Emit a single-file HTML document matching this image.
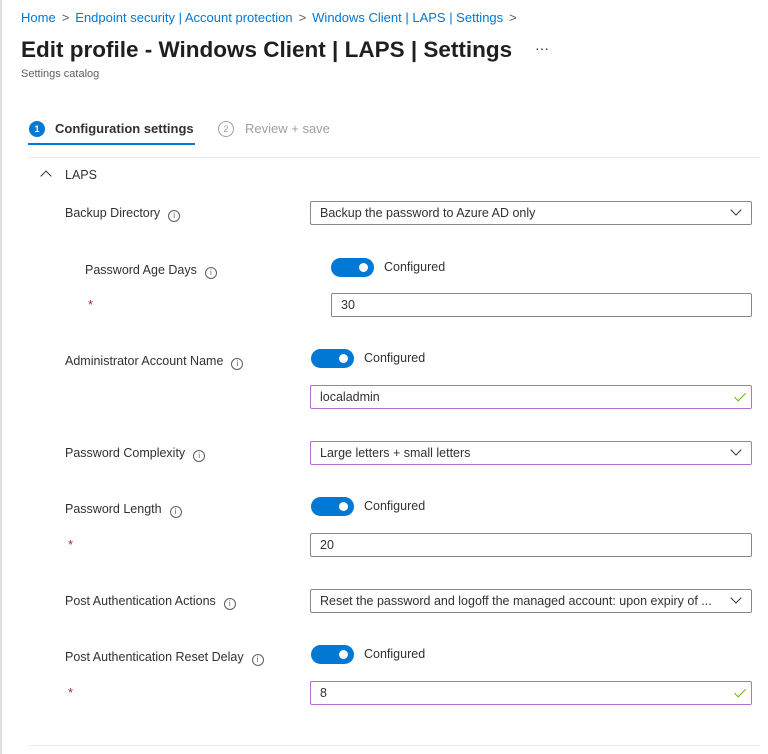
<!DOCTYPE html>
<html><head><meta charset="utf-8"><style>
*{margin:0;padding:0;box-sizing:border-box}
body{width:768px;height:754px;background:#fff;font-family:"Liberation Sans",sans-serif;color:#323130;position:relative;overflow:hidden;font-size:12px}
.a{position:absolute;white-space:nowrap}
.bc{top:10px;left:21px;font-size:13px;color:#0078d4}
.bc span{color:#605e5c;margin:0 6px}
.lbl{font-size:12.5px;color:#323130;line-height:14px}
.info{display:inline-block;width:12px;height:12px;border:1px solid #605e5c;border-radius:50%;font-size:8px;line-height:10px;text-align:center;color:#605e5c;margin-left:8px;vertical-align:-1px}
.inp{position:absolute;height:24px;border:1px solid #8a8886;border-radius:2px;font-size:12.5px;line-height:22px;padding-left:9px;color:#323130}
.pur{border-color:#b36fd0}
.chev{position:absolute;right:11px;top:4px;width:8px;height:8px;border-right:1.4px solid #323130;border-bottom:1.4px solid #323130;transform:rotate(45deg)}
.chk{position:absolute;right:8px;top:4px;width:6px;height:11px;border-right:1.5px solid #6bb700;border-bottom:1.5px solid #6bb700;transform:rotate(45deg)}
.tg{position:absolute;width:43px;height:19px;border-radius:10px;background:#0078d4}
.tg:after{content:"";position:absolute;right:6px;top:5px;width:9px;height:9px;border-radius:50%;background:#fff}
.cf{position:absolute;font-size:12.5px}
.ast{position:absolute;color:#a4262c;font-size:13px}
</style></head><body>
<div class="a" style="left:0;top:0;width:2px;height:754px;background:#e1dfdd"></div>
<div class="a bc">Home<span>&gt;</span>Endpoint security | Account protection<span>&gt;</span>Windows Client | LAPS | Settings<span>&gt;</span></div>
<div class="a" style="top:37px;left:21px;font-size:22.5px;font-weight:bold;color:#201f1e">Edit profile - Windows Client | LAPS | Settings</div>
<div class="a" style="top:40px;left:535px;font-size:14px;color:#323130">···</div>
<div class="a" style="top:68px;left:21px;font-size:11px;color:#605e5c">Settings catalog</div>
<div class="a" style="top:121px;left:29px;width:16px;height:16px;border-radius:50%;background:#0078d4;color:#fff;font-size:9px;text-align:center;line-height:16px;font-weight:bold">1</div>
<div class="a" style="top:121px;left:55px;font-size:13px;font-weight:bold;color:#323130">Configuration settings</div>
<div class="a" style="top:143px;left:28px;width:167px;height:2px;background:#0078d4"></div>
<div class="a" style="top:121px;left:218px;width:16px;height:16px;border-radius:50%;border:1px solid #a19f9d;color:#a19f9d;font-size:9px;text-align:center;line-height:14px">2</div>
<div class="a" style="top:121px;left:245px;font-size:13px;color:#a19f9d">Review + save</div>
<div class="a" style="top:157px;left:28px;width:732px;height:1px;background:#edebe9"></div>
<div class="a" style="top:172px;left:42px;width:8px;height:8px;border-left:1.3px solid #323130;border-top:1.3px solid #323130;transform:rotate(45deg)"></div>
<div class="a" style="top:168px;left:65px;font-size:12.5px">LAPS</div>

<div class="a lbl" style="left:65px;top:206px">Backup Directory<span class="info">i</span></div>
<div class="inp" style="left:310px;top:201px;width:442px">Backup the password to Azure AD only<div class="chev"></div></div>

<div class="a lbl" style="left:85px;top:263px">Password Age Days<span class="info">i</span></div>
<div class="tg" style="left:331px;top:258px"></div><div class="cf" style="left:384px;top:260px">Configured</div>
<div class="ast" style="left:88px;top:297px">*</div>
<div class="inp" style="left:331px;top:293px;width:421px">30</div>

<div class="a lbl" style="left:65px;top:354px">Administrator Account Name<span class="info">i</span></div>
<div class="tg" style="left:311px;top:349px"></div><div class="cf" style="left:364px;top:351px">Configured</div>
<div class="inp pur" style="left:310px;top:385px;width:442px">localadmin<div class="chk"></div></div>

<div class="a lbl" style="left:65px;top:446px">Password Complexity<span class="info">i</span></div>
<div class="inp pur" style="left:310px;top:441px;width:442px">Large letters + small letters<div class="chev"></div></div>

<div class="a lbl" style="left:65px;top:502px">Password Length<span class="info">i</span></div>
<div class="tg" style="left:311px;top:497px"></div><div class="cf" style="left:364px;top:499px">Configured</div>
<div class="ast" style="left:68px;top:537px">*</div>
<div class="inp" style="left:310px;top:533px;width:442px">20</div>

<div class="a lbl" style="left:65px;top:594px">Post Authentication Actions<span class="info">i</span></div>
<div class="inp" style="left:310px;top:589px;width:442px">Reset the password and logoff the managed account: upon expiry of ...<div class="chev"></div></div>

<div class="a lbl" style="left:65px;top:650px">Post Authentication Reset Delay<span class="info">i</span></div>
<div class="tg" style="left:311px;top:645px"></div><div class="cf" style="left:364px;top:647px">Configured</div>
<div class="ast" style="left:68px;top:685px">*</div>
<div class="inp pur" style="left:310px;top:681px;width:442px">8<div class="chk"></div></div>

<div class="a" style="top:745px;left:28px;width:732px;height:1px;background:#edebe9"></div>
</body></html>
